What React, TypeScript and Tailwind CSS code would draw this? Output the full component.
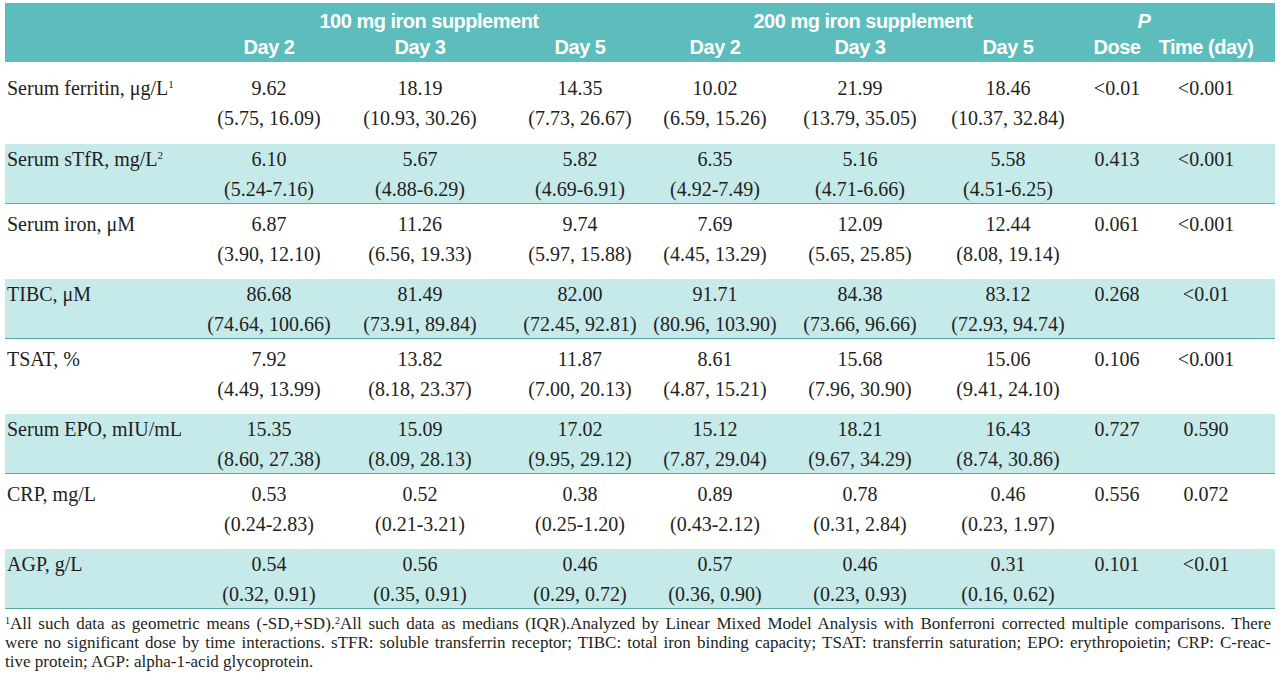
import React from "react";

interface Row {
    label: string,
    sup?: string,
    values: string[],
    ranges: string[],
    dose: string,
    time: string,
}

const rows: Row[] = [
    { label: "Serum ferritin, μg/L", sup: "1", values: ["9.62", "18.19", "14.35", "10.02", "21.99", "18.46"], ranges: ["(5.75, 16.09)", "(10.93, 30.26)", "(7.73, 26.67)", "(6.59, 15.26)", "(13.79, 35.05)", "(10.37, 32.84)"], dose: "<0.01", time: "<0.001" },
    { label: "Serum sTfR, mg/L", sup: "2", values: ["6.10", "5.67", "5.82", "6.35", "5.16", "5.58"], ranges: ["(5.24-7.16)", "(4.88-6.29)", "(4.69-6.91)", "(4.92-7.49)", "(4.71-6.66)", "(4.51-6.25)"], dose: "0.413", time: "<0.001" },
    { label: "Serum iron, μM", values: ["6.87", "11.26", "9.74", "7.69", "12.09", "12.44"], ranges: ["(3.90, 12.10)", "(6.56, 19.33)", "(5.97, 15.88)", "(4.45, 13.29)", "(5.65, 25.85)", "(8.08, 19.14)"], dose: "0.061", time: "<0.001" },
    { label: "TIBC, μM", values: ["86.68", "81.49", "82.00", "91.71", "84.38", "83.12"], ranges: ["(74.64, 100.66)", "(73.91, 89.84)", "(72.45, 92.81)", "(80.96, 103.90)", "(73.66, 96.66)", "(72.93, 94.74)"], dose: "0.268", time: "<0.01" },
    { label: "TSAT, %", values: ["7.92", "13.82", "11.87", "8.61", "15.68", "15.06"], ranges: ["(4.49, 13.99)", "(8.18, 23.37)", "(7.00, 20.13)", "(4.87, 15.21)", "(7.96, 30.90)", "(9.41, 24.10)"], dose: "0.106", time: "<0.001" },
    { label: "Serum EPO, mIU/mL", values: ["15.35", "15.09", "17.02", "15.12", "18.21", "16.43"], ranges: ["(8.60, 27.38)", "(8.09, 28.13)", "(9.95, 29.12)", "(7.87, 29.04)", "(9.67, 34.29)", "(8.74, 30.86)"], dose: "0.727", time: "0.590" },
    { label: "CRP, mg/L", values: ["0.53", "0.52", "0.38", "0.89", "0.78", "0.46"], ranges: ["(0.24-2.83)", "(0.21-3.21)", "(0.25-1.20)", "(0.43-2.12)", "(0.31, 2.84)", "(0.23, 1.97)"], dose: "0.556", time: "0.072" },
    { label: "AGP, g/L", values: ["0.54", "0.56", "0.46", "0.57", "0.46", "0.31"], ranges: ["(0.32, 0.91)", "(0.35, 0.91)", "(0.29, 0.72)", "(0.36, 0.90)", "(0.23, 0.93)", "(0.16, 0.62)"], dose: "0.101", time: "<0.01" },
]

// fixed tracks so every column centre sits where the printed table has it
const cols = "grid grid-cols-[189px_150px_152px_168px_102px_188px_108px_110px_68px]"

const Cell: React.FC<{ children: React.ReactNode }> = ({ children }) => (
    <div className="flex flex-col items-center whitespace-nowrap">{children}</div>
)

export default function App() {
    return (
        <div className="w-[1280px] h-[682px] bg-white text-[#231f20] pt-[3px] px-[5px] font-['Liberation_Serif',serif] overflow-hidden">
            {/* header band */}
            <div className={`${cols} bg-[#5dbcbc] text-white font-bold font-['Liberation_Sans_Narrow','Liberation_Sans',sans-serif] text-[20px] leading-[26px] pt-[5px] pb-[2px] h-[59px] tracking-tight`}>
                <div />
                <div className="col-span-3 text-center">100 mg iron supplement</div>
                <div className="col-span-3 text-center">200 mg iron supplement</div>
                <div className="col-span-2 text-center italic pr-[14px]">P</div>
                <div />
                {["Day 2", "Day 3", "Day 5", "Day 2", "Day 3", "Day 5", "Dose", "Time (day)"].map((d, i) => (
                    <Cell key={i}>{d}</Cell>
                ))}
            </div>

            {rows.map((row, i) => {
                const shaded = i % 2 === 1
                const height = i === 0 ? "h-[82px] pt-[11px]" : shaded ? "h-[60px] border-b border-[#55abab]" : "h-[75px] pt-[5px]"
                return (
                    <div key={i} className={`${cols} ${height} ${shaded ? "bg-[#c6e9ea]" : ""} text-[20px] leading-[30px]`}>
                        <div className="pl-[2px] whitespace-nowrap">
                            {row.label}
                            {row.sup && <span className="text-[11px] align-top leading-[22px]">{row.sup}</span>}
                        </div>
                        {row.values.map((v, j) => (
                            <Cell key={j}>
                                <span>{v}</span>
                                <span>{row.ranges[j]}</span>
                            </Cell>
                        ))}
                        <Cell>{row.dose}</Cell>
                        <Cell>{row.time}</Cell>
                        <div />
                    </div>
                )
            })}

            {/* footnote */}
            <div className="mt-[5px] text-[17px] leading-[19px] w-[1266px]">
                <p className="whitespace-nowrap text-justify [text-align-last:justify]">
                    <span className="text-[10px] align-top leading-[14px]">1</span>All such data as geometric means (-SD,+SD).<span className="text-[10px] align-top leading-[14px]">2</span>All such data as medians (IQR).Analyzed by Linear Mixed Model Analysis with Bonferroni corrected multiple comparisons. There
                </p>
                <p className="whitespace-nowrap text-justify [text-align-last:justify]">
                    were no significant dose by time interactions. sTFR: soluble transferrin receptor; TIBC: total iron binding capacity; TSAT: transferrin saturation; EPO: erythropoietin; CRP: C-reac-
                </p>
                <p>tive protein; AGP: alpha-1-acid glycoprotein.</p>
            </div>
        </div>
    )
}
